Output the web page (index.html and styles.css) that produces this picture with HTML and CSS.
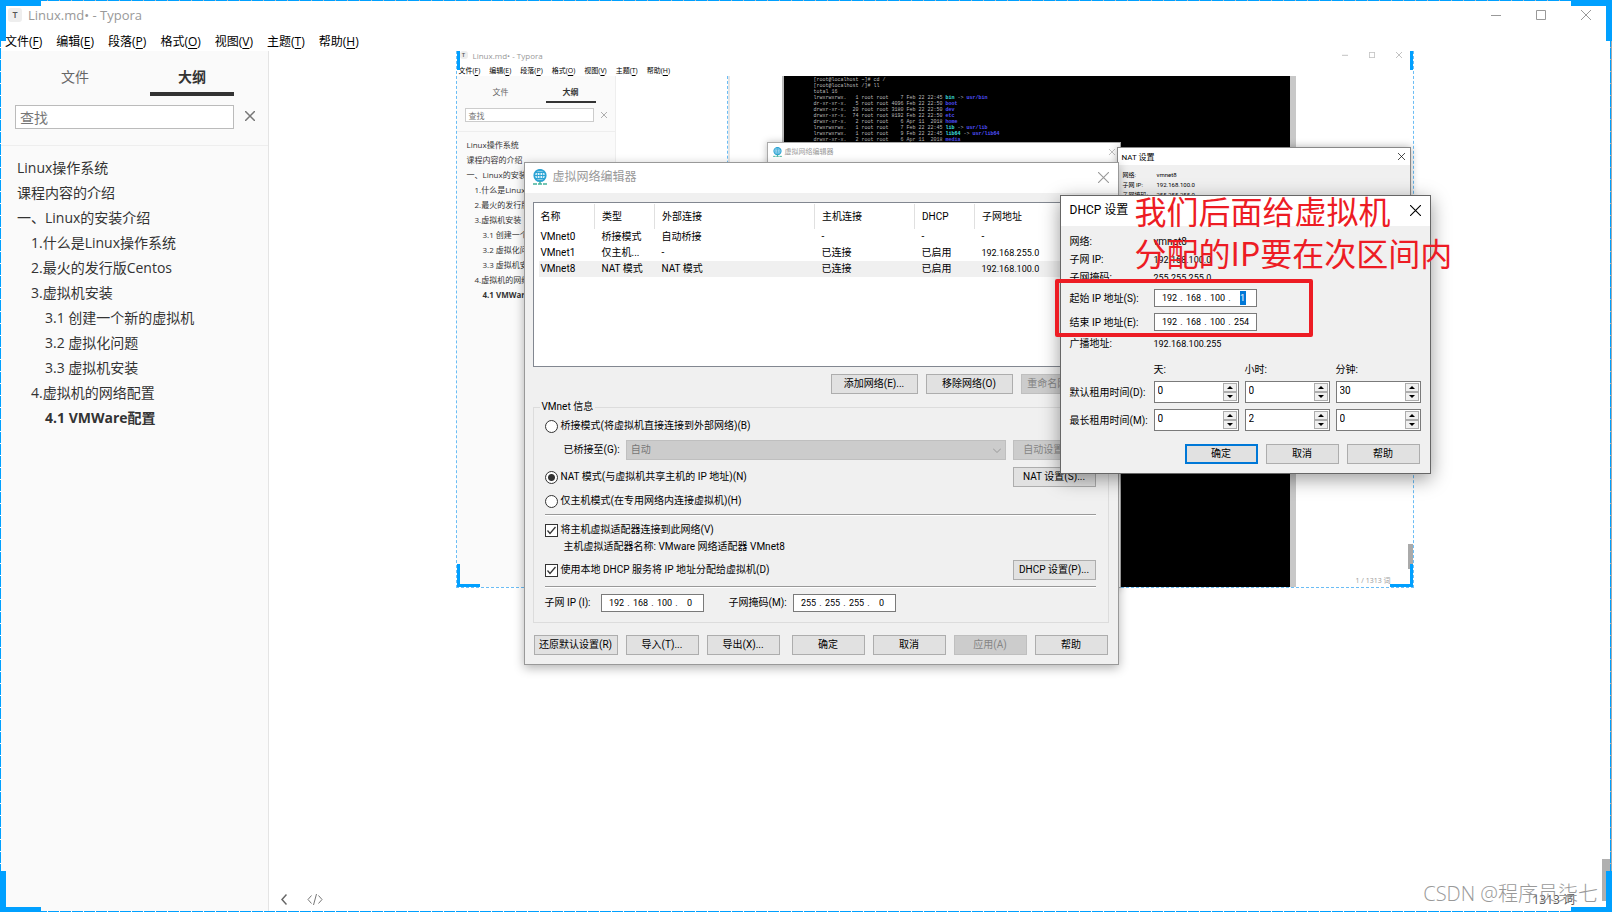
FILE: index.html
```html
<!DOCTYPE html>
<html lang="zh-CN">
<head>
<meta charset="utf-8">
<title>Linux.md• - Typora</title>
<link rel="stylesheet" href="styles.css">
</head>
<body>
<svg class="defs" aria-hidden="true">
  <symbol id="close" viewBox="0 0 10 10"><path d="M0 0L10 10M10 0L0 10" fill="none" stroke="currentColor"/></symbol>
  <symbol id="max" viewBox="0 0 10 10"><path d="M.5 .5h9v9h-9z" fill="none" stroke="currentColor"/></symbol>
  <symbol id="min" viewBox="0 0 10 10"><path d="M0 5.5h10" fill="none" stroke="currentColor"/></symbol>
  <symbol id="globe" viewBox="0 0 14 16">
    <circle cx="7" cy="6.500" r="5.700" fill="#e4f5fc" stroke="#2ba3d4" stroke-width="1.800"/>
    <path d="M1.500 6.500h11M7 1v11M2.500 3.500h9M2.500 9.500h9" stroke="#2ba3d4" fill="none"/>
    <ellipse cx="7" cy="6.500" rx="2.800" ry="5.500" stroke="#2ba3d4" fill="none"/>
    <path d="M7 12v3M0 15h4M5 15h4M10 15h4" stroke="#45b39c" stroke-width="1.500" fill="none"/>
  </symbol>
</svg>

<div class="app">
  <header class="titlebar">
    <span class="logo">T</span>
    <span class="doc-title">Linux.md• - Typora</span>
    <div class="win-buttons">
      <button type="button" aria-label="最小化"><svg><use href="#min"/></svg></button>
      <button type="button" aria-label="最大化"><svg><use href="#max"/></svg></button>
      <button type="button" aria-label="关闭"><svg><use href="#close"/></svg></button>
    </div>
  </header>
  <nav class="menubar">
    <button type="button">文件(<u>F</u>)</button><button type="button">编辑(<u>E</u>)</button><button type="button">段落(<u>P</u>)</button><button type="button">格式(<u>O</u>)</button><button type="button">视图(<u>V</u>)</button><button type="button">主题(<u>T</u>)</button><button type="button">帮助(<u>H</u>)</button>
  </nav>
  <div class="workspace">
    <aside class="sidebar">
      <div class="tabs"><button type="button">文件</button><button type="button" class="active">大纲</button></div>
      <div class="search"><input type="text" placeholder="查找" aria-label="查找"><button type="button" aria-label="清除"><svg><use href="#close"/></svg></button></div>
      <nav class="outline">
        <a href="#o1">Linux操作系统</a>
        <a href="#o2">课程内容的介绍</a>
        <a href="#o3">一、Linux的安装介绍</a>
        <a href="#o4" class="l2">1.什么是Linux操作系统</a>
        <a href="#o5" class="l2">2.最火的发行版Centos</a>
        <a href="#o6" class="l2">3.虚拟机安装</a>
        <a href="#o7" class="l3">3.1 创建一个新的虚拟机</a>
        <a href="#o8" class="l3">3.2 虚拟化问题</a>
        <a href="#o9" class="l3">3.3 虚拟机安装</a>
        <a href="#o10" class="l2">4.虚拟机的网络配置</a>
        <a href="#o11" class="l3 current">4.1 VMWare配置</a>
      </nav>
    </aside>

    <main class="editor">
      <div class="canvas">
        <section class="mini">
          <div class="mini-title"><span class="logo">T</span><span>Linux.md• - Typora</span>
            <div class="mini-win"><svg><use href="#min"/></svg><svg><use href="#max"/></svg><svg><use href="#close"/></svg></div>
          </div>
          <div class="mini-menu"><span>文件(<u>F</u>)</span><span>编辑(<u>E</u>)</span><span>段落(<u>P</u>)</span><span>格式(<u>O</u>)</span><span>视图(<u>V</u>)</span><span>主题(<u>T</u>)</span><span>帮助(<u>H</u>)</span></div>
          <div class="mini-work">
            <div class="mini-side">
              <div class="mini-tabs"><span>文件</span><span class="active">大纲</span></div>
              <div class="mini-search"><span>查找</span><svg><use href="#close"/></svg></div>
              <div class="mini-outline">
                <p>Linux操作系统</p><p>课程内容的介绍</p><p>一、Linux的安装介绍</p><p class="l2">1.什么是Linux操作系统</p><p class="l2">2.最火的发行版Centos</p><p class="l2">3.虚拟机安装</p><p class="l3">3.1 创建一个新的虚拟机</p><p class="l3">3.2 虚拟化问题</p><p class="l3">3.3 虚拟机安装</p><p class="l2">4.虚拟机的网络配置</p><p class="l3 current">4.1 VMWare配置</p>
              </div>
            </div>
            <div class="mini-main">
<pre class="terminal">[root@localhost ~]# cd /
[root@localhost /]# ll
total 16
lrwxrwxrwx.   1 root root    7 Feb 22 22:45 <b class="cy">bin</b> -&gt; <b>usr/bin</b>
dr-xr-xr-x.   5 root root 4096 Feb 22 22:50 <b>boot</b>
drwxr-xr-x.  20 root root 3180 Feb 22 22:50 <b>dev</b>
drwxr-xr-x.  74 root root 8192 Feb 22 22:50 <b>etc</b>
drwxr-xr-x.   2 root root    6 Apr 11  2018 <b>home</b>
lrwxrwxrwx.   1 root root    7 Feb 22 22:45 <b class="cy">lib</b> -&gt; <b>usr/lib</b>
lrwxrwxrwx.   1 root root    9 Feb 22 22:45 <b class="cy">lib64</b> -&gt; <b>usr/lib64</b>
drwxr-xr-x.   2 root root    6 Apr 11  2018 <b>media</b></pre>
              <span class="mini-count">1 / 1313 词</span>
            </div>
          </div>
          <i class="mini-thumb"></i>
          <i class="mark m-tl"></i><i class="mark m-tr"></i><i class="mark m-bl"></i><i class="mark m-br"></i>
        </section>

        <section class="back-editor"><svg class="globe"><use href="#globe"/></svg><span>虚拟网络编辑器</span><svg class="x"><use href="#close"/></svg></section>
        <section class="nat">
          <div class="nat-title"><span>NAT 设置</span><svg><use href="#close"/></svg></div>
          <dl><dt>网络:</dt><dd>vmnet8</dd><dt>子网 IP:</dt><dd>192.168.100.0</dd><dt>子网掩码:</dt><dd>255.255.255.0</dd></dl>
        </section>

        <section class="dialog vnet" aria-label="虚拟网络编辑器">
          <header><svg class="globe"><use href="#globe"/></svg><h2>虚拟网络编辑器</h2><button type="button" class="x" aria-label="关闭"><svg><use href="#close"/></svg></button></header>
          <div class="vnet-body">
            <div class="list">
              <table>
                <thead><tr><th class="c1">名称</th><th class="c1">类型</th><th class="c3">外部连接</th><th class="c4">主机连接</th><th class="c1">DHCP</th><th>子网地址</th></tr></thead>
                <tbody>
                  <tr><td>VMnet0</td><td>桥接模式</td><td>自动桥接</td><td>-</td><td>-</td><td>-</td></tr>
                  <tr><td>VMnet1</td><td>仅主机...</td><td>-</td><td>已连接</td><td>已启用</td><td class="num">192.168.255.0</td></tr>
                  <tr class="selected"><td>VMnet8</td><td>NAT 模式</td><td>NAT 模式</td><td>已连接</td><td>已启用</td><td class="num">192.168.100.0</td></tr>
                </tbody>
              </table>
            </div>
            <div class="list-actions"><button type="button" class="btn">添加网络(E)...</button><button type="button" class="btn">移除网络(O)</button><button type="button" class="btn" disabled>重命名网络(W)...</button></div>
            <fieldset>
              <legend>VMnet 信息</legend>
              <label class="row"><input type="radio" name="mode">桥接模式(将虚拟机直接连接到外部网络)(B)</label>
              <div class="row bridge"><label for="bridged">已桥接至(G):</label><div class="combo"><select id="bridged" disabled><option>自动</option></select><svg viewBox="0 0 8 5"><path d="M0 .5L4 4.500 8 .5" fill="none" stroke="#999"/></svg></div><button type="button" class="btn" disabled>自动设置(U)...</button></div>
              <div class="row nat-row"><label><input type="radio" name="mode" checked>NAT 模式(与虚拟机共享主机的 IP 地址)(N)</label><button type="button" class="btn">NAT 设置(S)...</button></div>
              <label class="row host-row"><input type="radio" name="mode">仅主机模式(在专用网络内连接虚拟机)(H)</label>
              <hr>
              <label class="row adapter"><input type="checkbox" checked>将主机虚拟适配器连接到此网络(V)</label>
              <p class="adapter-name">主机虚拟适配器名称: VMware 网络适配器 VMnet8</p>
              <div class="row dhcp-row"><label><input type="checkbox" checked>使用本地 DHCP 服务将 IP 地址分配给虚拟机(D)</label><button type="button" class="btn">DHCP 设置(P)...</button></div>
              <hr class="second">
              <div class="row subnet">
                <span class="sub-label">子网 IP (I):</span>
                <div class="ip" role="group" aria-label="子网 IP"><input value="192" aria-label="1"><i>.</i><input value="168" aria-label="2"><i>.</i><input value="100" aria-label="3"><i>.</i><input value="0" aria-label="4" class="short"></div>
                <span class="mask-label">子网掩码(M):</span>
                <div class="ip" role="group" aria-label="子网掩码"><input value="255" aria-label="1"><i>.</i><input value="255" aria-label="2"><i>.</i><input value="255" aria-label="3"><i>.</i><input value="0" aria-label="4" class="short"></div>
              </div>
            </fieldset>
            <footer><button type="button" class="btn wide">还原默认设置(R)</button><button type="button" class="btn">导入(T)...</button><button type="button" class="btn">导出(X)...</button><button type="button" class="btn apart">确定</button><button type="button" class="btn">取消</button><button type="button" class="btn" disabled>应用(A)</button><button type="button" class="btn">帮助</button></footer>
          </div>
        </section>

        <section class="dialog dhcp" aria-label="DHCP 设置">
          <header><h2>DHCP 设置</h2><button type="button" class="x" aria-label="关闭"><svg><use href="#close"/></svg></button></header>
          <div class="dhcp-body">
            <div class="info"><span>网络:</span><span>vmnet8</span></div>
            <div class="info"><span>子网 IP:</span><span class="num">192.168.100.0</span></div>
            <div class="info"><span>子网掩码:</span><span class="num">255.255.255.0</span></div>
            <div class="info tall"><span>起始 IP 地址(S):</span><div class="ip" role="group" aria-label="起始 IP 地址"><input value="192" aria-label="1"><i>.</i><input value="168" aria-label="2"><i>.</i><input value="100" aria-label="3"><i>.</i><input value="1" aria-label="4" class="short picked"></div></div>
            <div class="info tall"><span>结束 IP 地址(E):</span><div class="ip" role="group" aria-label="结束 IP 地址"><input value="192" aria-label="1"><i>.</i><input value="168" aria-label="2"><i>.</i><input value="100" aria-label="3"><i>.</i><input value="254" aria-label="4"></div></div>
            <div class="info"><span>广播地址:</span><span class="num">192.168.100.255</span></div>
            <div class="lease">
              <span></span><span class="unit">天:</span><span class="unit">小时:</span><span class="unit">分钟:</span>
              <span class="lease-label">默认租用时间(D):</span>
              <div class="spin"><input value="0" aria-label="默认天"><div><button type="button" aria-label="增加"></button><button type="button" class="down" aria-label="减少"></button></div></div>
              <div class="spin"><input value="0" aria-label="默认小时"><div><button type="button" aria-label="增加"></button><button type="button" class="down" aria-label="减少"></button></div></div>
              <div class="spin"><input value="30" aria-label="默认分钟"><div><button type="button" aria-label="增加"></button><button type="button" class="down" aria-label="减少"></button></div></div>
              <span class="lease-label">最长租用时间(M):</span>
              <div class="spin"><input value="0" aria-label="最长天"><div><button type="button" aria-label="增加"></button><button type="button" class="down" aria-label="减少"></button></div></div>
              <div class="spin"><input value="2" aria-label="最长小时"><div><button type="button" aria-label="增加"></button><button type="button" class="down" aria-label="减少"></button></div></div>
              <div class="spin"><input value="0" aria-label="最长分钟"><div><button type="button" aria-label="增加"></button><button type="button" class="down" aria-label="减少"></button></div></div>
            </div>
            <footer><button type="button" class="btn primary">确定</button><button type="button" class="btn">取消</button><button type="button" class="btn">帮助</button></footer>
          </div>
        </section>

        <div class="highlight"></div>
        <p class="note">我们后面给虚拟机<br>分配的IP要在次区间内</p>
      </div>

      <div class="status">
        <button type="button" aria-label="侧边栏"><svg width="6" height="11" viewBox="0 0 6 11"><path d="M5.500 .5L1 5.500l4.500 5" fill="none" stroke="#666" stroke-width="1.500"/></svg></button>
        <button type="button" aria-label="源代码模式"><svg width="16" height="11" viewBox="0 0 16 11"><path d="M4.500 1.500L1 5.500l3.500 4M11.500 1.500L15 5.500l-3.500 4M9.500 0l-3 11" fill="none" stroke="#777"/></svg></button>
        <span class="count">1313 词</span>
      </div>
      <i class="thumb"></i>
    </main>
  </div>
  <span class="watermark">CSDN @程序员柒七</span>
  <div class="frame"><i class="h tl"></i><i class="v tl"></i><i class="h tr"></i><i class="v tr"></i><i class="h bl"></i><i class="v bl"></i><i class="h br"></i><i class="v br"></i></div>
</div>
</body>
</html>
```
FILE: styles.css
```css
* { box-sizing: border-box; }
body { margin: 0; background: #fff; color: #000; font-family: "Open Sans", "Noto Sans CJK SC", sans-serif; font-size: 14px; }
button { font: inherit; color: inherit; background: none; border: 0; padding: 0; white-space: nowrap; }
input, select { font: inherit; color: inherit; }
i { font-style: normal; }
svg { display: block; }
p, h2, dl, dd, pre { margin: 0; }
.defs { position: absolute; width: 0; height: 0; }

.app { position: relative; height: 100vh; display: flex; flex-direction: column; overflow: hidden; }
.titlebar { display: flex; align-items: center; height: 32px; padding: 0 21px 2px 8px; color: #999; }
.logo { width: 14px; height: 14px; border-radius: 3px; background: #eee; color: #555; font-size: 9px; line-height: 14px; text-align: center; font-weight: 600; }
.doc-title { margin-left: 6px; font-size: 13px; }
.win-buttons { margin-left: auto; display: flex; gap: 35px; }
.win-buttons svg { width: 10px; height: 10px; }
.menubar { display: flex; gap: 14px; height: 19px; padding-left: 5px; font-size: 12px; line-height: 19px; }
u { text-underline-offset: 2px; }

.workspace { flex: 1; display: flex; min-height: 0; }
.sidebar { width: 269px; padding-left: 1px; border-right: 1px solid #e4e4e4; background: #fafafa; color: #333; }
.tabs { display: flex; padding: 10px 0 0 32px; gap: 33px; }
.tabs button { width: 84px; height: 35px; padding-bottom: 2px; color: #666; border-bottom: 4px solid transparent; }
.tabs .active { color: #333; font-weight: 700; border-color: #333; }
.search { display: flex; align-items: center; gap: 11px; height: 50px; padding: 0 13px 7px 14px; border-bottom: 1px solid #eee; }
.search input { width: 219px; height: 24px; padding: 0 4px; border: 1px solid #bbb; background: #fff; }
.search input::placeholder { color: #777; }
.search button { color: #777; padding-bottom: 2px; }
.search svg { width: 10px; height: 10px; overflow: visible; stroke-width: 1.5; }
.outline { display: flex; flex-direction: column; padding: 9px 0 0 16px; }
.outline a { color: inherit; text-decoration: none; line-height: 25px; }
.outline .l2 { padding-left: 14px; }
.outline .l3 { padding-left: 28px; }
.current { font-weight: 700; }

.editor { position: relative; flex: 1; display: flex; flex-direction: column; align-items: center; padding-right: 12px; }
.canvas { position: relative; width: 958px; flex: 1; }

/* embedded picture of the editor */
.mini { position: relative; height: 537px; display: flex; flex-direction: column; background: #fff; border: 1px dashed #6bbdf5; border-top: 0; font-size: 8px; overflow: hidden; }
.mini-title { display: flex; align-items: center; height: 8px; padding: 0 11px 0 3px; color: #999; gap: 5px; }
.mini-title .logo { width: 8px; height: 8px; font-size: 6px; line-height: 8px; }
.mini-win { display: flex; gap: 21px; margin-left: auto; }
.mini-win svg { width: 6px; height: 6px; }
.mini-menu { display: flex; gap: 9px; height: 17px; padding: 6px 0 0 2px; font-size: 7px; line-height: 11px; }
.mini-work { flex: 1; display: flex; min-height: 0; }
.mini-side { width: 159px; background: #fafafa; border-right: 1px solid #eee; color: #333; }
.mini-tabs { display: flex; gap: 20px; padding: 6px 0 0 19px; line-height: 19px; text-align: center; }
.mini-tabs span { width: 50px; color: #666; border-bottom: 2px solid transparent; }
.mini-tabs .active { font-weight: 700; color: #333; border-color: #333; }
.mini-search { display: flex; align-items: center; gap: 7px; height: 29px; padding: 0 8px 5px; border-bottom: 1px solid #eee; color: #777; }
.mini-search span { width: 130px; height: 14px; padding-left: 3px; border: 1px solid #ccc; background: #fff; line-height: 14px; }
.mini-search svg { width: 6px; height: 6px; }
.mini-outline { padding: 5px 0 0 10px; line-height: 15px; white-space: nowrap; overflow: hidden; }
.mini-outline .l2 { padding-left: 8px; }
.mini-outline .l3 { padding-left: 16px; }
.mini-main { flex: 1; display: flex; align-items: flex-end; margin-left: 111px; padding-right: 22px; border-left: 1px dashed #6bbdf5; box-shadow: inset 2px 0 #e6e6e6; }
.terminal { align-self: stretch; width: 514px; margin-left: 54px; padding: 1px 0 0 30px; border-left: 2px solid #bbb; border-right: 6px solid #c8c8c8; background: #000; color: #bbb; font: 5px/6px "Liberation Mono", monospace; }
.terminal b { color: #5151ff; }
.terminal .cy { color: #3fe0e0; }
.mini-count { margin-left: auto; padding-bottom: 1px; font-size: 7px; line-height: 10px; color: #999; }
.mini-thumb { position: absolute; right: 0; bottom: 18px; width: 5px; height: 25px; background: #aaa; }
.mark { position: absolute; width: 24px; height: 24px; border: 0 solid #00a0ff; }
.m-tl { left: -1px; top: 0; height: 19px; border-left-width: 4px; }
.m-tr { right: -1px; top: 0; height: 19px; border-right-width: 4px; }
.m-bl { left: -1px; bottom: -1px; border-left-width: 4px; border-bottom-width: 4px; }
.m-br { right: -1px; bottom: -1px; border-right-width: 4px; border-bottom-width: 4px; }

.back-editor { position: absolute; left: 311px; top: 91px; width: 354px; height: 446px; display: flex; align-items: flex-start; padding: 4px 5px 0; background: #fff; border: 1px solid #aaa; box-shadow: 0 0 7px rgba(0,0,0,.25); font-size: 7px; line-height: 10px; color: #999; }
.back-editor .globe { width: 9px; height: 10px; margin-right: 3px; }
.back-editor .x { width: 6px; height: 6px; margin: 2px 0 0 auto; }
.nat { position: absolute; left: 661px; top: 96px; width: 294px; height: 90px; background: #f0f0f0; border: 1px solid #888; box-shadow: 0 0 8px rgba(0,0,0,.3); font: 6px Roboto, "Noto Sans CJK SC", sans-serif; }
.nat-title { display: flex; align-items: center; justify-content: space-between; height: 17px; padding: 0 5px 0 4px; background: #fff; font-size: 8px; }
.nat-title svg { width: 7px; height: 7px; }
.nat dl { display: grid; grid-template-columns: 34px 1fr; padding: 5px 0 0 5px; line-height: 10px; }

/* dialogs */
.dialog { position: absolute; background: #f0f0f0; font: 10px/14px Roboto, "Noto Sans CJK SC", sans-serif; white-space: nowrap; }
.dialog header { display: flex; align-items: center; height: 30px; background: #fff; font-size: 12px; }
.dialog h2 { font: inherit; }
.x { margin-left: auto; }
.x svg { width: 11px; height: 11px; overflow: visible; }
.btn { width: 73px; height: 20px; border: 1px solid #adadad; background: #e1e1e1; overflow: hidden; text-align: center; }
.btn:disabled { background: #ccc; border-color: #bfbfbf; color: #858585; }
.num { font-size: 9px; }
.vnet { left: 68px; top: 111px; width: 595px; border: 1px solid #999; box-shadow: 0 3px 10px rgba(0,0,0,.3); }
.vnet header { padding: 0 9px 2px 8px; color: #999; }
.vnet .globe { width: 14px; height: 16px; margin-right: 6px; }
.vnet-body { padding: 9px 9px 9px 8px; }
.list { height: 165px; border: 1px solid #828790; background: #fff; padding: 1px 0 0 5px; overflow: hidden; }
table { width: 100%; border-collapse: collapse; table-layout: fixed; }
th { height: 25px; padding: 1px 7px 0; font-weight: 400; text-align: left; border-right: 1px solid #e0e0e0; }
th:first-child, td:first-child { padding-left: 2px; }
th:last-child { border: 0; }
.c1 { width: 60px; }
th.c1:first-child { width: 56px; }
.c3 { width: 160px; }
.c4 { width: 100px; }
td { height: 16px; padding: 0 7px; line-height: 16px; }
.selected { background: #f0f0f0; }
.list-actions { display: flex; justify-content: flex-end; gap: 8px; padding: 7px 1px 0 0; }
.list-actions .btn { width: 87px; }
fieldset { display: flex; flex-direction: column; min-width: 0; margin: 6px 0 0; padding: 2px 12px 9px 11px; border: 1px solid #dcdcdc; }
legend { padding: 0 2px; margin-left: -5px; }
.row { display: flex; align-items: center; height: 20px; }
.row label { display: flex; align-items: center; }
.row > .btn { margin-left: auto; width: 83px; }
input[type=radio], input[type=checkbox] { appearance: none; width: 13px; height: 13px; margin: 0 3px 0 0; border: 1px solid #333; background: #fff; }
input[type=radio] { border-radius: 50%; }
input[type=radio]:checked { background: radial-gradient(circle, #333 3px, #fff 4px); }
input[type=checkbox]:checked { background: #fff url("data:image/svg+xml,%3Csvg xmlns='http://www.w3.org/2000/svg' viewBox='0 0 11 11'%3E%3Cpath d='M1.500 5.500l2.500 3L9.500 2' fill='none' stroke='%23333' stroke-width='1.300'/%3E%3C/svg%3E"); }
.bridge { margin-top: 4px; padding-left: 19px; }
.combo { position: relative; width: 380px; margin-left: 6px; }
.combo select { appearance: none; display: block; width: 100%; height: 20px; padding: 0 4px; border: 1px solid #bfbfbf; border-radius: 0; background: #ccc; color: #777; opacity: 1; }
.combo svg { position: absolute; right: 5px; top: 8px; width: 8px; height: 5px; }
.nat-row { margin-top: 7px; }
.host-row { margin-top: 4px; }
hr { width: 100%; height: 2px; margin: 3px 0 4px; border: 0; border-top: 1px solid #999; background: #fff; }
.adapter-name { padding-left: 19px; }
.dhcp-row { margin-top: 6px; }
hr.second { margin: 6px 0 5px; }
.sub-label { width: 56px; }
.mask-label { width: 64px; margin-left: 25px; }
.ip { display: flex; align-items: center; width: 103px; height: 18px; padding-left: 6px; background: #fff; border: 1px solid #7a7a7a; font-size: 9px; }
.ip input { width: 18px; padding: 0; border: 0; background: none; text-align: center; }
.ip i { width: 6px; text-align: center; }
.ip .short { width: 6px; margin-left: 7px; }
.ip .picked { background: #0078d7; color: #fff; }
.vnet footer { display: flex; gap: 8px; padding: 12px 0 0 1px; }
.vnet .wide { width: 84px; }
.vnet .apart { margin-left: 4px; }

.dhcp { left: 604px; top: 144px; width: 371px; border: 1px solid #666; box-shadow: 0 5px 18px rgba(0,0,0,.4); }
.dhcp header { padding: 0 9px 2px 9px; }
.dhcp-body { padding: 6px 10px 9px 9px; }
.info { display: flex; align-items: center; height: 18px; }
.info.tall { height: 24px; }
.info > span { padding-top: 2px; }
.info > span:first-child { width: 84px; }
.lease { display: grid; grid-template-columns: 78px repeat(3, 85px); grid-template-rows: 14px 22px 22px; gap: 6px; align-items: center; margin-top: 9px; }
.unit { padding-top: 4px; }
.lease-label { padding-top: 2px; }
.spin { display: flex; height: 22px; border: 1px solid #7a7a7a; background: #fff; }
.spin input { flex: 1; min-width: 0; padding: 0 3px 3px; border: 0; background: none; }
.spin > div { display: flex; flex-direction: column; width: 16px; padding: 1px; }
.spin button { flex: 1; display: grid; place-items: center; border: 1px solid #adadad; background: #f0f0f0; }
.spin button::before { content: ""; border: 3px solid transparent; border-top: 0; border-bottom-color: #000; }
.spin .down::before { border-top: 3px solid #000; border-bottom: 0; }
.dhcp footer { display: flex; justify-content: flex-end; gap: 8px; padding-top: 13px; }
.primary { border: 2px solid #0078d7; }

.highlight { position: absolute; left: 599px; top: 228px; width: 258px; height: 58px; border: 4px solid #ed1c24; border-radius: 2px; }
.note { position: absolute; left: 679px; top: 138px; color: #ed1c24; font: 32px/42px "Noto Sans CJK SC", sans-serif; white-space: nowrap; }

.status { align-self: stretch; display: flex; align-items: center; gap: 20px; height: 26px; padding: 0 25px 0 12px; }
.count { margin-left: auto; font-size: 12px; color: #555; }
.thumb { position: absolute; right: 2px; bottom: 11px; width: 8px; height: 42px; background: #b0b0b0; }
.watermark { position: absolute; right: 14px; bottom: 3px; color: #999; font: 300 20px/30px "Open Sans", "Noto Sans CJK SC", sans-serif; }

/* capture frame round the whole window */
.frame { position: absolute; inset: 0; pointer-events: none; border-right: 1px solid #aaa;
  background:
    repeating-linear-gradient(90deg, #00a0ff 0 11px, #bbb 11px 12px) 0 0 / 100% 1px no-repeat,
    repeating-linear-gradient(90deg, #00a0ff 0 11px, #fff 11px 12px) 0 100% / 100% 1px no-repeat,
    repeating-linear-gradient(#00a0ff 0 11px, #fff 11px 12px) 0 0 / 1px 100% no-repeat,
    repeating-linear-gradient(#00a0ff 0 11px, #bbb 11px 12px) 100% 0 / 1px 100% no-repeat; }
.frame i { position: absolute; background: #00a0ff; }
.frame .h { width: 41px; height: 6px; }
.frame .v { width: 6px; height: 41px; }
.frame .tl { left: 0; top: 0; }
.frame .tr { right: -1px; top: 0; }
.frame .bl { left: 0; bottom: 0; }
.frame .br { right: -1px; bottom: 0; }
.frame .h.bl, .frame .h.br { height: 5px; }
```
